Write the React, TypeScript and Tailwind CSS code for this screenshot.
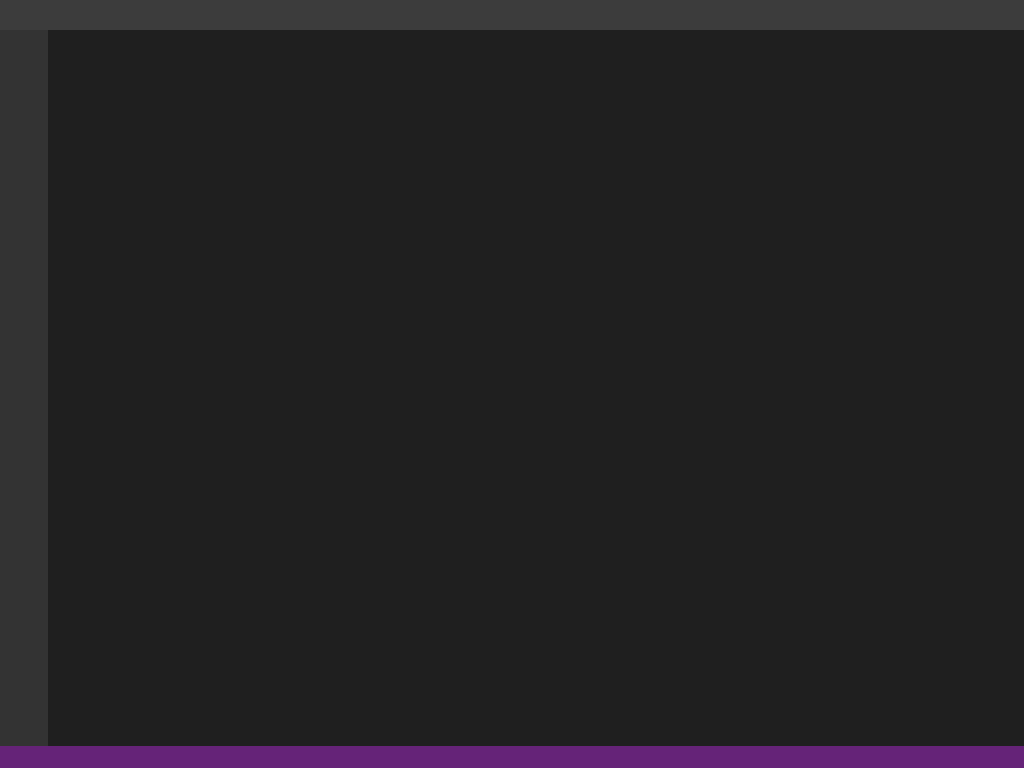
export default function App() {
  return (
    <div className="flex h-[768px] w-[1024px] flex-col overflow-hidden font-['Liberation_Sans',sans-serif]">
      <div className="h-[30px] shrink-0 bg-[#3c3c3c]" />
      <div className="flex min-h-0 flex-1">
        <div className="w-[48px] shrink-0 bg-[#333333]" />
        <div className="flex-1 bg-[#1f1f1f]" />
      </div>
      <div className="h-[22px] shrink-0 bg-[#652378]" />
    </div>
  );
}
